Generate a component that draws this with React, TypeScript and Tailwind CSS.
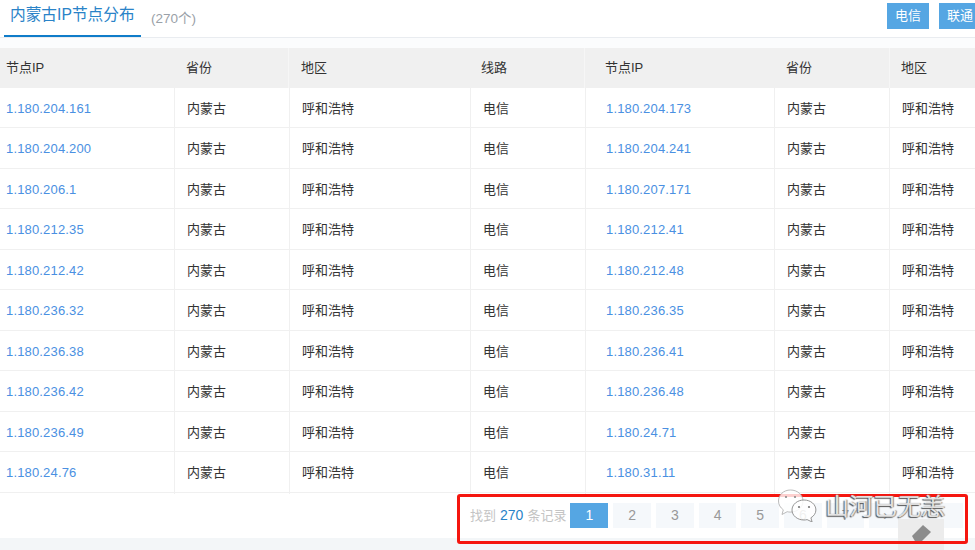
const rows: [string, string][] = [
  ["1.180.204.161", "1.180.204.173"],
  ["1.180.204.200", "1.180.204.241"],
  ["1.180.206.1", "1.180.207.171"],
  ["1.180.212.35", "1.180.212.41"],
  ["1.180.212.42", "1.180.212.48"],
  ["1.180.236.32", "1.180.236.35"],
  ["1.180.236.38", "1.180.236.41"],
  ["1.180.236.42", "1.180.236.48"],
  ["1.180.236.49", "1.180.24.71"],
  ["1.180.24.76", "1.180.31.11"],
];

const cols = "grid grid-cols-[175px_115px_181px_115px_189px_115px_85px]";
const headCols = "grid grid-cols-[174px_115px_181px_115px_190px_115px_85px]";
const font = { fontFamily: '"Liberation Sans","Noto Sans CJK SC",sans-serif' };

function WeChat() {
  return (
    <svg width="42" height="34" viewBox="0 0 42 34">
      <path d="M12.500 2C5.600 2 0.500 6.800 0.500 13c0 3.600 1.800 6.700 4.800 8.800L4 26.500l5.200-2.800c1.100.3 2.200.4 3.300.4 6.900 0 12.500-4.900 12.500-11.100S19.400 2 12.500 2z" fill="rgba(255,255,255,.8)" stroke="#aaa" strokeWidth="0.8" />
      <path d="M26 12c-6.600 0-12 4.400-12 10s5.400 10 12 10c1.100 0 2.100-.1 3.100-.4l5 2.400-1.200-4.200c3-1.800 5-4.600 5-7.800 0-5.600-5.300-10-11.900-10z" fill="rgba(255,255,255,.85)" stroke="#8a8a8a" strokeWidth="0.9" />
      <circle cx="8" cy="9" r="1.100" fill="#888" />
      <circle cx="17" cy="9" r="1.100" fill="#888" />
      <circle cx="21" cy="19" r="1.100" fill="#777" />
      <circle cx="31" cy="19" r="1.100" fill="#777" />
    </svg>
  );
}

export default function App() {
  return (
    <div className="relative w-[975px] h-[550px] overflow-hidden bg-white text-[13px] text-[#333]" style={font}>
      <div className="flex h-[38px] border-b border-[#e9ecf0]">
        <div className="ml-[4px] w-[137px] h-[37px] border-b-2 border-[#0f7cc9] pl-[6px] text-[15.700px] leading-[30px] whitespace-nowrap text-[#2a83c8]">内蒙古IP节点分布</div>
        <div className="ml-[10px] pt-[10px] text-[13.500px] leading-[18px] text-[#9aa1a8]">(270个)</div>
        <div className="ml-auto flex gap-[10px] pt-[3px]">
          <div className="w-[42px] h-[26px] bg-[#55a6e3] text-white text-center leading-[26px]">电信</div>
          <div className="w-[36px] h-[26px] bg-[#55a6e3] text-white pl-[8px] leading-[26px] whitespace-nowrap overflow-hidden">联通</div>
        </div>
      </div>
      <div className="h-[10px] bg-[#fbfcfd]" />
      <div className={`${headCols} h-[39.500px] bg-[#f0f0f0] leading-[40px] text-[#333]`}>
        <div className="pl-[6px]">节点IP</div>
        <div className="pl-[12px] border-r border-[#f6f6f6]">省份</div>
        <div className="pl-[12px]">地区</div>
        <div className="pl-[11px] border-r border-[#f6f6f6]">线路</div>
        <div className="pl-[20px]">节点IP</div>
        <div className="pl-[11px] border-r border-[#f6f6f6]">省份</div>
        <div className="pl-[11px]">地区</div>
      </div>
      {rows.map(([a, b]) => (
        <div key={a} className={`${cols} h-[40.5px] border-b border-[#f0f0f0] leading-[42px]`}>
          <div className="pl-[6px] border-r border-[#f0f0f0] text-[#4a90e2] tracking-[0.16px]">{a}</div>
          <div className="pl-[12px] border-r border-[#f0f0f0]">内蒙古</div>
          <div className="pl-[12px] border-r border-[#f0f0f0]">呼和浩特</div>
          <div className="pl-[12px] border-r border-[#f0f0f0]">电信</div>
          <div className="pl-[20px] border-r border-[#f0f0f0] text-[#4a90e2] tracking-[0.16px]">{b}</div>
          <div className="pl-[12px] border-r border-[#f0f0f0]">内蒙古</div>
          <div className="pl-[12px]">呼和浩特</div>
        </div>
      ))}
      <div className="flex items-center h-[25px] mt-[10.5px] pl-[470px] text-[13px] text-[#c4c4c4]">
        <span>找到</span>
        <span className="mx-[4px] text-[14px] text-[#2a83c8]">270</span>
        <span>条记录</span>
        <div className="ml-[4px] w-[38px] h-[25px] bg-[#55a6e3] text-white text-[14px] text-center leading-[25px]">1</div>
        {["2", "3", "4", "5", "6", "7"].map((n) => (
          <div key={n} className="ml-[5px] w-[37.670px] h-[25px] bg-[#f5f8fb] text-[#999] text-[14px] text-center leading-[25px]">{n}</div>
        ))}
        <div className="ml-[5px] w-[94px] h-[25px] pl-[14px] bg-[#f5f8fb] text-[#999] text-[14px] leading-[25px]">›</div>
      </div>
      <div className="absolute left-0 right-0 top-[538px] h-[12px] bg-[#f3f6f8]" />
      {/* eraser button */}
      <div className="absolute left-[898px] top-[519px] w-[46px] h-[31px] bg-[#ececec]">
        <svg className="absolute left-[13px] top-[5px]" width="22" height="20" viewBox="0 0 22 20"><path d="M1 12 12 1l8 7L9 19H5z" fill="#8c8c8c" /></svg>
      </div>
      {/* annotation */}
      <div className="absolute left-[457px] top-[494px] w-[511px] h-[50px] border-[3px] border-[#f5160f] rounded-[3px]" />
      {/* watermark */}
      <div className="absolute left-[778px] top-[488px]"><WeChat /></div>
      <span className="absolute left-[825px] top-[490px] text-[24px] leading-[34px] whitespace-nowrap text-[rgba(255,255,255,.8)] [text-shadow:-1px_1px_1px_#555,1px_0_1px_#888]">山河已无恙</span>
    </div>
  );
}
